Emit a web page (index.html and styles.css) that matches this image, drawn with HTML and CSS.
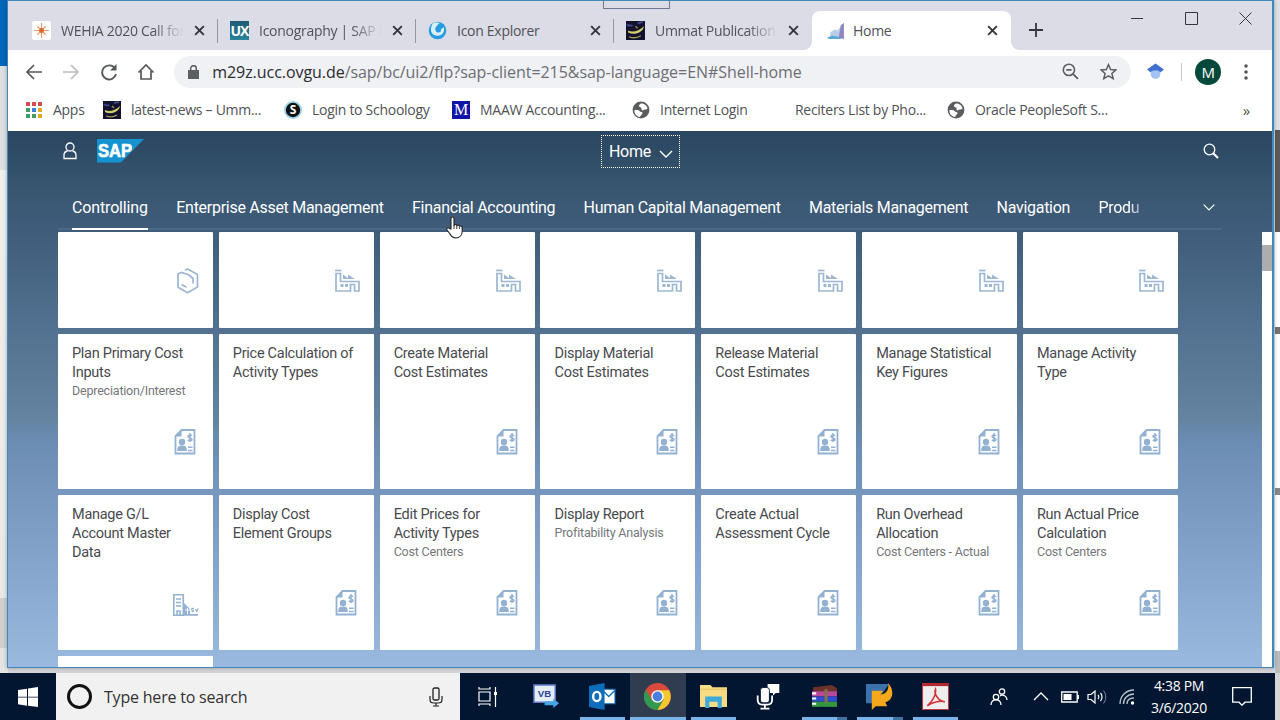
FILE: index.html
```html
<!DOCTYPE html>
<html lang="en">

<head>
    <meta charset="UTF-8">
    <meta name="viewport" content="width=device-width, initial-scale=1.0">
    <title>Home</title>
    <link rel="stylesheet" href="styles.css">
</head>

<body>
    <!-- shared icons -->
    <svg class="sprite">
        <symbol id="i-close" viewBox="0 0 12 12"><path d="M2 2l8 8M10 2l-8 8" fill="none" stroke="#33363b" stroke-width="1.8"/></symbol>
        <symbol id="i-globe" viewBox="0 0 18 18"><circle cx="9" cy="9" r="8.4" fill="#5b5c5f"/><path d="M2.500 9c2 0 4-.5 5 1s3 .5 3 2-2 2-2.500 4C4 15.500 2 12 2.500 9zM9 2.500c3-.5 6 2 6.500 5-1 1.500-3 .5-4 1.500s-2.500 0-2-1.500-2.500-1-2.500-2.500 1-2 2-2.500z" fill="#fff"/></symbol>
        <symbol id="i-ummat" viewBox="0 0 18 18"><path d="M0 0h18v18H0z" fill="#12122f"/><path d="M1 3c2 3 4 0 5 2M11 2l5-1" stroke="#3f4580" stroke-width="2" fill="none"/><path d="M2 9c4 2 10 1 15-4-1 6-9 9-15 6z" fill="#d5cd68"/><path d="M3 15c3 1 8 1 11-1M9 5l2 2" stroke="#a39b50" stroke-width="1.3" fill="none"/></symbol>
        <symbol id="i-factory" viewBox="0 0 26 24"><g fill="none" stroke="#9db7d3" stroke-width="1.700"><path d="M2 4.500V22h14.500v-6.500h4V22h4.500v-9.500H6.500v-8z"/><path d="M1 1.500h6.500"/></g><path d="M9 10V5.500l5 3.500V5.500l7 4.500zM6.500 15h3v3h-3zM11 15h3v3h-3z" fill="#9db7d3"/></symbol>
        <symbol id="i-bill" viewBox="0 0 24 28"><path d="M8.500 2h13v23.500h-19V8z" fill="none" stroke="#93b1d1" stroke-width="1.800"/><path d="M1.600 8.500 8.500 1.500v7z" fill="#93b1d1"/><circle cx="9" cy="14" r="3.200" fill="#93b1d1"/><path d="M4.200 23c0-4.500 1.500-5.500 4.800-5.500s4.800 1 4.800 5.500z" fill="#93b1d1"/><path d="M15 19.300h4.500M15 22.500h4.500M19 7.800c-1-1.200-4-1.200-4 .6 0 1.800 4 1.100 4 3 0 1.600-3 1.700-4.200.5M17 5v9" fill="none" stroke="#93b1d1" stroke-width="1.500"/></symbol>
        <symbol id="i-hex" viewBox="0 0 24 26"><path d="M9 2.200l2.500-1.200 10 5.500v12.500L11.500 24.700 2 19.300V6l3.500-1.500L13 7l4 3.500v5M5.500 16.500l5 2.800" fill="none" stroke="#9db7d3" stroke-width="1.700"/></symbol>
        <symbol id="i-plant" viewBox="0 0 27 24"><path d="M1.800 1.800h9.500v20.500H1.800zM4 6h5M4 9.500h5M4 13h5M5 22v-4h3v4" fill="none" stroke="#93b1d1" stroke-width="1.600"/><path d="M12 10l6 6v5h8v1.800H12z" fill="#93b1d1"/><path d="M13 17h5M15.500 15v6" stroke="#fff"/><path d="M22 15.500c-3-.5-3 1.500-1.500 1.500s1.500 2-1 1.500M23.500 16l1 2.500 1.800-3" fill="none" stroke="#93b1d1" stroke-width="1.200"/></symbol>
    </svg>

    <div class="desktop">
        <div class="behind-left"></div>
        <div class="behind-right"></div>
        <div class="window">
            <div class="tabstrip">
                <div class="tab">
                    <svg class="fav" viewBox="0 0 18 18"><rect width="18" height="18" rx="2" fill="#fff"/><path d="M9 2v14M2 9h14M5 5l8 8M13 5l-8 8" stroke="#ee9a6c" stroke-width="1.100"/><circle cx="9" cy="9" r="2.300" fill="#e0642c"/></svg>
                    <span class="tab-title fade">WEHIA 2020 Call for</span>
                    <svg class="x"><use href="#i-close"/></svg>
                </div>
                <div class="tab">
                    <span class="fav ux">UX</span>
                    <span class="tab-title fade">Iconography | SAP F</span>
                    <svg class="x"><use href="#i-close"/></svg>
                </div>
                <div class="tab">
                    <svg class="fav" viewBox="0 0 18 18"><circle cx="9" cy="9" r="8.300" fill="#259be0"/><path d="M4 3c3-3 7-1 7-1L8 5c-2 2-1 5 1 6 3 0 4-2 3-3l3-2c1 4-1 8-6 8S2 10 3 6z" fill="#d9f1ff"/></svg>
                    <span class="tab-title">Icon Explorer</span>
                    <svg class="x"><use href="#i-close"/></svg>
                </div>
                <div class="tab last">
                    <svg class="fav"><use href="#i-ummat"/></svg>
                    <span class="tab-title fade">Ummat Publications</span>
                    <svg class="x"><use href="#i-close"/></svg>
                </div>
                <div class="tab active">
                    <svg class="fav" viewBox="0 0 18 18"><path d="M4 11l4-3 3 1 3-4 2 1v10H4z" fill="#b7cde8"/><path d="M14 4l3-2v15l-5-1z" fill="#8f87c4"/><path d="M1 16c4-3 9-2 13 0v1H3z" fill="#55a9d2"/></svg>
                    <span class="tab-title">Home</span>
                    <svg class="x"><use href="#i-close"/></svg>
                </div>
                <svg class="plus" viewBox="0 0 14 14"><path d="M7 0v14M0 7h14" stroke="#33363b" stroke-width="1.800"/></svg>
                <div class="win-buttons">
                    <svg viewBox="0 0 13 13"><path d="M0 6.500h12" stroke="#33363b"/></svg>
                    <svg viewBox="0 0 13 13"><path d="M.5.500h12v12H.5z" fill="none" stroke="#33363b"/></svg>
                    <svg viewBox="0 0 13 13"><path d="M.5.500l12 12M12.500.500l-12 12" stroke="#33363b"/></svg>
                </div>
                <div class="grip"></div>
            </div>

            <div class="toolbar">
                <svg class="nav" viewBox="0 0 18 18"><path d="M17 9H2M9 2L2 9l7 7" fill="none" stroke="#55585c" stroke-width="1.700"/></svg>
                <svg class="nav" viewBox="0 0 18 18"><path d="M1 9h15M9 2l7 7-7 7" fill="none" stroke="#b9babd" stroke-width="1.500"/></svg>
                <svg class="nav" viewBox="0 0 18 18"><path d="M15 5.500A7 7 0 1 0 16 11" fill="none" stroke="#55585c" stroke-width="1.900"/><path d="M16.500 1v6.500H10z" fill="#55585c"/></svg>
                <svg class="nav" viewBox="0 0 18 18"><path d="M1.500 9.500L9 2l7.500 7.500M4 8v8h10V8" fill="none" stroke="#55585c" stroke-width="1.700"/></svg>
                <div class="omnibox">
                    <svg class="lock" viewBox="0 0 11 14"><path d="M0 5h11v9H0z" fill="#5b5e62"/><path d="M2.700 6V3.500a2.800 2.800 0 0 1 5.600 0V6" fill="none" stroke="#5b5e62" stroke-width="1.500"/></svg>
                    <span class="url"><b>m29z.ucc.ovgu.de</b>/sap/bc/ui2/flp?sap-client=215&amp;sap-language=EN#Shell-home</span>
                    <svg class="omni-icon" viewBox="0 0 16 16"><circle cx="6.500" cy="6.500" r="5.300" fill="none" stroke="#5b5e62" stroke-width="1.500"/><path d="M10.500 10.500L15 15M4 6.500h5" stroke="#5b5e62" stroke-width="1.700"/></svg>
                    <svg class="omni-icon" viewBox="0 0 16 16"><path d="M8 1.500l2 4.600 5 .4-3.800 3.300 1.200 4.900L8 12.100l-4.400 2.600 1.200-4.900L1 6.500l5-.4z" fill="none" stroke="#5b5e62" stroke-width="1.400"/></svg>
                </div>
                <svg class="scholar" viewBox="0 0 16 16"><circle cx="8" cy="10.500" r="4.500" fill="#a3c2f5"/><path d="M8 .5L0 6l3.500 3C5 6 11 6 12.500 9L16 6z" fill="#3f6fcf"/></svg>
                <div class="bar"></div>
                <div class="avatar">M</div>
                <svg class="dots" viewBox="0 0 4 16"><circle cx="2" cy="2" r="1.800"/><circle cx="2" cy="8" r="1.800"/><circle cx="2" cy="14" r="1.800"/></svg>
            </div>

            <div class="bookmarks">
                <div class="bm bm-apps">
                    <svg viewBox="0 0 16 16"><path d="M0 0h4v4H0zM6 0h4v4H6zM12 0h4v4h-4z" fill="#d64c4c"/><path d="M0 6h4v4H0zM0 12h4v4H0zM6 12h4v4H6z" fill="#3f9e62"/><path d="M6 6h4v4H6z" fill="#3f7fd6"/><path d="M12 6h4v4h-4zM12 12h4v4h-4z" fill="#dfa928"/></svg>
                    <span>Apps</span>
                </div>
                <div class="bm bm-news"><svg><use href="#i-ummat"/></svg><span>latest-news – Umm...</span></div>
                <div class="bm bm-school">
                    <svg viewBox="0 0 18 18"><circle cx="9" cy="9" r="9" fill="#9bd3ea"/><circle cx="9" cy="9" r="7.200" fill="#111"/><text x="9" y="13.200" text-anchor="middle" class="s-letter">S</text></svg>
                    <span>Login to Schoology</span>
                </div>
                <div class="bm bm-maaw"><i class="maaw">M</i><span>MAAW Accounting...</span></div>
                <div class="bm bm-login"><svg><use href="#i-globe"/></svg><span>Internet Login</span></div>
                <div class="bm bm-list"><span>Reciters List by Pho...</span></div>
                <div class="bm bm-oracle"><svg><use href="#i-globe"/></svg><span>Oracle PeopleSoft S...</span></div>
                <div class="more">»</div>
            </div>

            <div class="shell">
                <div class="shell-header">
                    <svg class="user" viewBox="0 0 14 18"><circle cx="7" cy="5" r="4" fill="none" stroke="#fff" stroke-width="1.300"/><path d="M4.500 9C2 9.500 1 11 1 13v3.500h12V13c0-2-1-3.500-3.500-4" fill="none" stroke="#fff" stroke-width="1.300"/></svg>
                    <svg class="sap" viewBox="0 0 48 24"><path d="M0 0h47L24 23.500H0z" fill="#1593d0"/><text x="1" y="18" textLength="34" lengthAdjust="spacingAndGlyphs" class="sap-text">SAP</text></svg>
                    <div class="home"><span>Home</span><svg viewBox="0 0 14 8"><path d="M1 1l6 6 6-6" fill="none" stroke="#fff" stroke-width="1.400"/></svg></div>
                    <svg class="find" viewBox="0 0 16 16"><circle cx="6.500" cy="6.500" r="5.300" fill="none" stroke="#fff" stroke-width="1.300"/><path d="M10 10l5 5" stroke="#fff" stroke-width="2.200"/></svg>
                </div>
                <div class="groups">
                    <span class="group selected">Controlling</span>
                    <span class="group">Enterprise Asset Management</span>
                    <span class="group">Financial Accounting</span>
                    <span class="group">Human Capital Management</span>
                    <span class="group">Materials Management</span>
                    <span class="group">Navigation</span>
                    <span class="group cut">Produ</span>
                    <svg class="overflow" viewBox="0 0 12 7"><path d="M.7.700L6 6 11.300.700" fill="none" stroke="#fff" stroke-width="1.200"/></svg>
                </div>
                <div class="content">
                    <div class="tiles">
                        <div class="tile"><svg class="hex"><use href="#i-hex"/></svg></div>
                        <div class="tile"><svg class="factory"><use href="#i-factory"/></svg></div>
                        <div class="tile"><svg class="factory"><use href="#i-factory"/></svg></div>
                        <div class="tile"><svg class="factory"><use href="#i-factory"/></svg></div>
                        <div class="tile"><svg class="factory"><use href="#i-factory"/></svg></div>
                        <div class="tile"><svg class="factory"><use href="#i-factory"/></svg></div>
                        <div class="tile"><svg class="factory"><use href="#i-factory"/></svg></div>

                        <div class="tile"><h3>Plan Primary Cost<br>Inputs</h3><p>Depreciation/Interest</p><svg class="bill"><use href="#i-bill"/></svg></div>
                        <div class="tile"><h3>Price Calculation of<br>Activity Types</h3></div>
                        <div class="tile"><h3>Create Material<br>Cost Estimates</h3><svg class="bill"><use href="#i-bill"/></svg></div>
                        <div class="tile"><h3>Display Material<br>Cost Estimates</h3><svg class="bill"><use href="#i-bill"/></svg></div>
                        <div class="tile"><h3>Release Material<br>Cost Estimates</h3><svg class="bill"><use href="#i-bill"/></svg></div>
                        <div class="tile"><h3>Manage Statistical<br>Key Figures</h3><svg class="bill"><use href="#i-bill"/></svg></div>
                        <div class="tile"><h3>Manage Activity<br>Type</h3><svg class="bill"><use href="#i-bill"/></svg></div>

                        <div class="tile"><h3>Manage G/L<br>Account Master<br>Data</h3><svg class="plant"><use href="#i-plant"/></svg></div>
                        <div class="tile"><h3>Display Cost<br>Element Groups</h3><svg class="bill"><use href="#i-bill"/></svg></div>
                        <div class="tile"><h3>Edit Prices for<br>Activity Types</h3><p>Cost Centers</p><svg class="bill"><use href="#i-bill"/></svg></div>
                        <div class="tile"><h3>Display Report</h3><p>Profitability Analysis</p><svg class="bill"><use href="#i-bill"/></svg></div>
                        <div class="tile"><h3>Create Actual<br>Assessment Cycle</h3><svg class="bill"><use href="#i-bill"/></svg></div>
                        <div class="tile"><h3>Run Overhead<br>Allocation</h3><p>Cost Centers - Actual</p><svg class="bill"><use href="#i-bill"/></svg></div>
                        <div class="tile"><h3>Run Actual Price<br>Calculation</h3><p>Cost Centers</p><svg class="bill"><use href="#i-bill"/></svg></div>

                        <div class="tile"></div>
                    </div>
                    <div class="scrollbar"><div class="thumb"></div></div>
                </div>
            </div>
        </div>
        <svg class="cursor" viewBox="0 0 18 23"><path d="M5 13V2.500C5 .5 8 .5 8 2.500V9c1-1 2.500-.5 2.800.5 1-.8 2.300-.3 2.600.7 1.300-.6 2.800 0 2.800 1.600V15c0 4-2.500 7-6.500 7-3.500 0-4.500-2-6-4.500L1 14c-1-2 1.500-3 2.500-1.500z" fill="#fff" stroke="#222" stroke-width="1.100"/><path d="M8 9v4M10.800 10v3M13.400 11v2" stroke="#222" stroke-width=".9"/></svg>
    </div>

    <div class="taskbar">
        <div class="start"><svg viewBox="0 0 20 20"><path d="M0 3l9-1.300v8H0zM10 1.500L20 0v9.700H10zM0 10.500h9v8.200L0 17.300zM10 10.500h10V20l-10-1.300z" fill="#fff"/></svg></div>
        <div class="search">
            <div class="cortana"></div>
            <span>Type here to search</span>
            <svg viewBox="0 0 14 20"><rect x="4" y="1" width="6" height="12" rx="1.500" fill="none" stroke="#222" stroke-width="1.300"/><path d="M1 9v4c0 2 2 3 4 3h4c2 0 4-1 4-3V9M7 16v3M4 19h6" fill="none" stroke="#222" stroke-width="1.200"/></svg>
        </div>
        <div class="task view"><svg viewBox="0 0 20 20"><path d="M1 5h11v9H1zM1 0v2h11V0M1 19v-2h11v2M17.500 0v20" fill="none" stroke="#fff" stroke-width="1.200"/><path d="M16 5h3v3h-3z" fill="#fff"/></svg></div>
        <div class="task"><svg class="big" viewBox="0 0 28 26"><path d="M1 1h22v18H1z" fill="#e6edfb" stroke="#5f7ac9" stroke-width="1.500"/><path d="M12 18h9v-3l6 5-6 5v-3h-9z" fill="#49a2e2"/><text x="5" y="14" class="vb">VB</text></svg></div>
        <div class="task open"><svg class="big" viewBox="0 0 26 26"><path d="M12 6h13v14H12z" fill="#fff" stroke="#1473bc"/><path d="M13 7l6 6 6-6" fill="none" stroke="#1473bc" stroke-width="1.500"/><path d="M0 3l15-3v26L0 23z" fill="#0f6ebc"/><ellipse cx="7.500" cy="13" rx="3.500" ry="4.500" fill="none" stroke="#fff" stroke-width="2.300"/></svg></div>
        <div class="task open current"><svg class="big" viewBox="0 0 26 26"><circle cx="13" cy="13" r="13" fill="#d94a3c"/><path d="M1.700 6.500A13 13 0 0 0 13 26l6-10-6 3-6-3z" fill="#2f9a50"/><path d="M24.300 7H13l6 9-6 10A13 13 0 0 0 24.300 7z" fill="#f6c82f"/><circle cx="13" cy="13" r="6" fill="#fff"/><circle cx="13" cy="13" r="4.700" fill="#4a80dd"/></svg></div>
        <div class="task open"><svg class="big" viewBox="0 0 26 24"><path d="M0 1h10l2 2h14v19H0z" fill="#f7dc86"/><path d="M0 5h26" stroke="#e9c561"/><path d="M5 23v-11h16v11h-4v-6H9v6z" fill="#3fa9d8"/></svg></div>
        <div class="task"><svg class="big" viewBox="0 0 26 30"><path d="M12 1h13v10h-4l-3 3v-3h-6z" fill="#fff"/><rect x="4" y="5" width="10" height="17" rx="3" fill="#fff" stroke="#021631"/><path d="M1 14v5c0 4 3 5 5 5h6c3 0 5-2 5-5v-5M9 24v4M4 28.500h10" fill="none" stroke="#fff" stroke-width="2"/></svg></div>
        <div class="task open multi"><svg class="big" viewBox="0 0 26 22"><path d="M2 2L20 0l5 3v4H2z" fill="#6c332b"/><path d="M1 6h24v5H1z" fill="#b9489f"/><path d="M1 11h24v5H1z" fill="#304ed2"/><path d="M1 16h24v5H1z" fill="#35963d"/><path d="M1 8h4M1 13h4M1 18h4" stroke="#fff" stroke-width="2"/><path d="M13 4h3v13h-3z" fill="#82704a"/></svg></div>
        <div class="task open multi"><svg class="big" viewBox="0 0 28 28"><path d="M0 1h24L16 12H8v9H0z" fill="#3972ad"/><path d="M6 8h12l-3 4c7-1 9-6 8-12 7 8 5 18-3 20l2 4H10l-4 4z" fill="#f5a81b"/></svg></div>
        <div class="task open"><svg class="big" viewBox="0 0 26 26"><path d="M.5.500h25v25H.5z" fill="#efeeee" stroke="#b63d41"/><path d="M0 0h26v3H0z" fill="#b32831"/><path d="M5 22c4-3 9-10 8-16-2 4 3 12 9 12-4-1-11 0-17 4z" fill="none" stroke="#d13337" stroke-width="1.500"/></svg></div>

        <div class="tray">
            <svg class="people" viewBox="0 0 18 18"><g fill="none" stroke="#fff" stroke-width="1.300"><circle cx="6" cy="9" r="2.700"/><path d="M1 17c0-7 10-7 10 0"/><circle cx="12" cy="3.500" r="2.700"/><path d="M10 8c3-2 7 0 7 4"/></g></svg>
            <svg class="up" viewBox="0 0 16 9"><path d="M1 8l7-7 7 7" fill="none" stroke="#fff" stroke-width="1.300"/></svg>
            <svg class="battery" viewBox="0 0 18 12"><path d="M.7 1h15.500v10H.7z" fill="none" stroke="#fff" stroke-width="1.300"/><path d="M2.500 3h8v6h-8zM16 4h2v4h-2z" fill="#fff"/></svg>
            <svg class="volume" viewBox="0 0 20 16"><path d="M1 5.500h3L8 2v12l-4-3.500H1z" fill="none" stroke="#fff" stroke-width="1.200"/><path d="M11 6c1 1 1 3 0 4M13.500 4c2 2 2 6 0 8" fill="none" stroke="#fff" stroke-width="1.200"/><path d="M16.500 1.500c3 4 3 9 0 13" fill="none" stroke="#79869a"/></svg>
            <svg class="wifi" viewBox="0 0 16 16"><path d="M1 15C1 7 7 1 15 1M4.500 15C4.500 9 9 5 15 5M8 15c0-4 3-6 7-6" fill="none" stroke="#b9c1cc" stroke-width="1.300"/><circle cx="13.500" cy="14" r="1.700" fill="#fff"/></svg>
            <div class="clock">4:38 PM<br>3/6/2020</div>
            <svg class="notes" viewBox="0 0 20 19"><path d="M.7.700h18.600v14.500H13l-3 3-3-3H.7z" fill="none" stroke="#fff" stroke-width="1.300"/></svg>
        </div>
    </div>
</body>

</html>
```

FILE: styles.css
```css
* {
    margin: 0;
    padding: 0;
    box-sizing: border-box;
}

body {
    width: 1280px;
    height: 720px;
    overflow: hidden;
    display: flex;
    flex-direction: column;
    background-color: #d5d5d8;
    font-family: "Open Sans", "Noto Sans", sans-serif;
    font-size: 14px;
    letter-spacing: -.28px;
    color: #505256;
}

svg {
    display: block;
    flex: none;
}

span {
    white-space: nowrap;
}

.sprite {
    position: absolute;
    width: 0;
    height: 0;
}

/* desktop */
.desktop {
    position: relative;
    height: 673px;
    flex: none;
}

.behind-left {
    position: absolute;
    left: 0;
    top: 0;
    width: 8px;
    height: 673px;
    background: linear-gradient(#0067b8 66px, #dedfe0 66px, #dedfe0 170px, #f0f0ee 170px, #e9e9e8 598px, #cfcfcf 598px, #cfcfcf 648px, #e4e4e4 648px);
}

.behind-right {
    position: absolute;
    left: 1273px;
    top: 0;
    width: 7px;
    height: 673px;
    border-left: 2px solid #d0dce8;
    background: linear-gradient(#dfe1e5 130px, #5d5958 130px, #5d5958 232px, #fff 232px, #fff 327px, #77716f 327px, #77716f 334px, #fff 334px, #fff 488px, #888 488px, #888 495px, #fff 495px, #fff 651px, #bbb 651px);
}

.window {
    position: absolute;
    left: 7px;
    top: 0;
    width: 1267px;
    height: 668px;
    border: 1px solid #4189bb;
    border-right-width: 2px;
    display: flex;
    flex-direction: column;
    background-color: #fff;
    box-shadow: 0 0 4px rgba(0, 0, 0, .3);
}

/* tabs */
.tabstrip {
    position: relative;
    height: 49px;
    flex: none;
    padding-left: 12px;
    display: flex;
    background-color: #dcdce6;
}

.tab {
    position: relative;
    width: 198px;
    height: 39px;
    margin-top: 10px;
    padding: 0 12px 1px 12px;
    display: flex;
    align-items: center;
}

.tab:not(.last):not(.active)::after {
    content: "";
    position: absolute;
    right: 0;
    top: 8px;
    width: 1px;
    height: 24px;
    background-color: #96979f;
}

.fav {
    width: 19px;
    height: 19px;
    margin-right: 10px;
    flex: none;
}

.ux {
    background: linear-gradient(#1d5b74, #29849a);
    color: #fff;
    font: bold 14px/20px "Open Sans", sans-serif;
    letter-spacing: -1px;
    text-align: center;
}

.tab-title {
    flex: 1;
    overflow: hidden;
}

.fade {
    -webkit-mask-image: linear-gradient(90deg, #000 75%, transparent);
    mask-image: linear-gradient(90deg, #000 75%, transparent);
}

.x {
    width: 13px;
    height: 13px;
    margin-left: 9px;
}

.tab.active {
    width: 199px;
    padding-left: 14px;
    background-color: #fff;
    border-radius: 8px 8px 0 0;
}

.active .fav {
    margin-right: 8px;
}

.tab.active::before,
.tab.active::after {
    content: "";
    position: absolute;
    bottom: 0;
    width: 8px;
    height: 8px;
}

.tab.active::before {
    left: -8px;
    background: radial-gradient(circle at 0 0, transparent 7.5px, #fff 8px);
}

.tab.active::after {
    right: -8px;
    background: radial-gradient(circle at 100% 0, transparent 7.5px, #fff 8px);
}

.plus {
    width: 14px;
    height: 14px;
    margin: 22px 0 0 18px;
}

.win-buttons {
    margin: 11px 20px 0 auto;
    display: flex;
    gap: 41px;
}

.win-buttons svg {
    width: 13px;
    height: 13px;
}

.grip {
    position: absolute;
    left: 595px;
    top: 0;
    width: 67px;
    height: 8px;
    border: 1px solid #6f7892;
    border-top: 0;
}

/* toolbar */
.toolbar {
    height: 43px;
    flex: none;
    padding: 0 24px 0 17px;
    display: flex;
    align-items: center;
}

.nav {
    width: 18px;
    height: 18px;
    margin-right: 19.300px;
}

.omnibox {
    width: 957px;
    height: 32px;
    padding: 0 14px;
    display: flex;
    align-items: center;
    border-radius: 16px;
    background-color: #f0f1f4;
}

.lock {
    width: 11px;
    height: 14px;
    margin-right: 13px;
}

.url {
    flex: 1;
    font-size: 16px;
    letter-spacing: -.05px;
    color: #6c6e73;
}

.url b {
    font-weight: normal;
    color: #2b2c2f;
}

.omni-icon {
    width: 17px;
    height: 17px;
    margin-left: 21px;
}

.scholar {
    width: 17px;
    height: 17px;
    margin-left: 16px;
}

.bar {
    width: 1px;
    height: 18px;
    margin: 0 13px 0 17px;
    background-color: #c4c6ca;
}

.avatar {
    width: 26px;
    height: 26px;
    border-radius: 50%;
    background-color: #04493b;
    color: #fff;
    font: 15px/26px "Open Sans", sans-serif;
    text-align: center;
}

.dots {
    width: 4px;
    height: 16px;
    margin-left: auto;
    fill: #55585c;
}

/* bookmarks */
.bookmarks {
    height: 38px;
    flex: none;
    display: flex;
    align-items: center;
    padding: 0 22px 5px 18px;
}

.bm {
    display: flex;
    align-items: center;
    flex: none;
}

.bm svg,
.maaw {
    width: 18px;
    height: 18px;
    flex: none;
    margin-right: 10px;
}

.bm-apps {
    width: 77px;
}

.bm-news {
    width: 181px;
}

.bm-school {
    width: 168px;
}

.bm-maaw {
    width: 180px;
}

.bm-login {
    width: 163px;
}

.bm-list {
    width: 152px;
}

.bm-apps svg {
    width: 16px;
    height: 16px;
    margin-right: 11px;
}

.s-letter {
    font: bold 12px "Open Sans", sans-serif;
    letter-spacing: 0;
    fill: #fff;
}

.maaw {
    background-color: #1014a8;
    color: #fff;
    font: 16px/18px "Liberation Serif", serif;
    text-align: center;
}

.more {
    margin-left: auto;
    font-size: 15px;
}

/* launchpad */
.shell {
    flex: 1;
    min-height: 0;
    display: flex;
    flex-direction: column;
    background: linear-gradient(#29455f, #38556f 54px, #3f5d7b 100px, #516f8e 190px, #6483a0 285px, #6b8cb3 310px, #83a2ca 420px, #9ab9de);
    font-family: Roboto, "Liberation Sans", sans-serif;
}

.shell-header {
    height: 40px;
    flex: none;
    display: flex;
    align-items: center;
    padding: 0 53px 0 55px;
}

.user {
    width: 14px;
    height: 18px;
}

.sap {
    width: 48px;
    height: 24px;
    margin-left: 20px;
}

.sap-text {
    font: bold 18px "Liberation Sans", sans-serif;
    letter-spacing: 0;
    fill: #fff;
    stroke: #fff;
    stroke-width: .6px;
}

.home {
    width: 79px;
    height: 33px;
    margin: 0 auto 0 456px;
    padding-left: 7px;
    display: flex;
    align-items: center;
    border: 1px dotted #fff;
    color: #fff;
    font-size: 16px;
    letter-spacing: -.3px;
}

.home span {
    width: 50px;
    padding-top: 1px;
}

.home svg {
    width: 14px;
    height: 8px;
    margin-top: 5px;
}

.find {
    width: 16px;
    height: 16px;
}

.groups {
    height: 59px;
    flex: none;
    margin: 0 50px;
    padding: 27px 7px 0 14px;
    display: flex;
    border-bottom: 2px solid #4d6988;
    color: #fff;
    font-size: 16px;
    line-height: 20px;
}

.group {
    flex: none;
    height: 32px;
    margin-right: 28.300px;
}

.selected {
    width: 76px;
    letter-spacing: -.15px;
    border-bottom: 2px solid #fff;
}

.cut {
    margin-right: 0;
    -webkit-mask-image: linear-gradient(90deg, #000 75%, rgba(0, 0, 0, .5));
    mask-image: linear-gradient(90deg, #000 75%, rgba(0, 0, 0, .5));
}

.overflow {
    width: 12px;
    height: 7px;
    margin: 6px 0 0 auto;
}

.content {
    flex: 1;
    min-height: 0;
    margin-top: 2px;
    display: flex;
    justify-content: space-between;
    overflow: hidden;
}

.tiles {
    margin-left: 50px;
    display: grid;
    grid-template-columns: repeat(7, 155px);
    grid-template-rows: 96px 155px 155px 155px;
    gap: 6px 5.830px;
}

.tile {
    position: relative;
    padding: 10px 0 0 14px;
    background-color: #fff;
    border-radius: 1px;
}

.tile h3 {
    font-size: 14.500px;
    line-height: 19px;
    font-weight: normal;
    color: #484a4d;
}

.tile p {
    font-size: 12.500px;
    line-height: 18px;
    letter-spacing: -.2px;
    color: #74777a;
}

/* icons sit in the lower right corner of a tile */
.tile svg {
    position: absolute;
}

.bill {
    right: 16px;
    bottom: 33px;
    width: 24px;
    height: 28px;
}

.factory {
    right: 13.500px;
    bottom: 35px;
    width: 26px;
    height: 24px;
}

.hex {
    right: 13px;
    bottom: 34px;
    width: 24px;
    height: 26px;
}

.plant {
    right: 14px;
    bottom: 33px;
    width: 27px;
    height: 24px;
}

.scrollbar {
    width: 10px;
    padding-top: 13px;
    background-color: #fff;
}

.thumb {
    height: 26px;
    background-color: #adadb0;
}

.cursor {
    position: absolute;
    left: 446px;
    top: 216px;
    width: 18px;
    height: 23px;
}

/* taskbar */
.taskbar {
    width: 1275px;
    height: 47px;
    flex: none;
    display: flex;
    background-color: #021631;
}

.start {
    width: 56px;
    display: flex;
    align-items: center;
    justify-content: center;
}

.start svg {
    width: 20px;
    height: 20px;
}

.search {
    width: 404px;
    padding: 0 17px 0 11px;
    display: flex;
    align-items: center;
    background-color: #f1f1f2;
    color: #333;
    font-size: 16px;
    letter-spacing: -.2px;
}

.search span {
    flex: 1;
    padding-left: 12px;
}

.search svg {
    width: 14px;
    height: 20px;
}

.cortana {
    width: 25px;
    height: 25px;
    border: 3px solid #111;
    border-radius: 50%;
}

.task {
    position: relative;
    width: 55.500px;
    display: flex;
    align-items: center;
    justify-content: center;
}

.view {
    width: 59px;
    padding-right: 4px;
}

.view svg {
    width: 20px;
    height: 20px;
}

.big {
    width: 27px;
    height: 27px;
}

.vb {
    font: bold 10px "Liberation Sans", sans-serif;
    letter-spacing: 0;
    fill: #2d4796;
}

.open::after {
    content: "";
    position: absolute;
    left: 5px;
    right: 5px;
    bottom: 0;
    height: 3px;
    background-color: #76b4ea;
}

.multi::after {
    background: linear-gradient(90deg, #76b4ea 78%, #42729f 78%);
}

.current {
    background-color: #303d50;
}

.current::after {
    left: 0;
    right: 0;
}

.tray {
    flex: 1;
    padding-left: 27px;
    display: flex;
    align-items: center;
    color: #fff;
}

.people {
    width: 18px;
    height: 18px;
}

.up {
    width: 16px;
    height: 9px;
    margin-left: 25px;
}

.battery {
    width: 18px;
    height: 12px;
    margin-left: 12px;
}

.volume {
    width: 20px;
    height: 16px;
    margin-left: 8px;
}

.wifi {
    width: 16px;
    height: 16px;
    margin-left: 12px;
}

.clock {
    width: 62px;
    margin-left: 13px;
    font-size: 14px;
    line-height: 22px;
    letter-spacing: -.3px;
    text-align: center;
    white-space: nowrap;
}

.notes {
    width: 20px;
    height: 19px;
    margin-left: 22px;
}
```
